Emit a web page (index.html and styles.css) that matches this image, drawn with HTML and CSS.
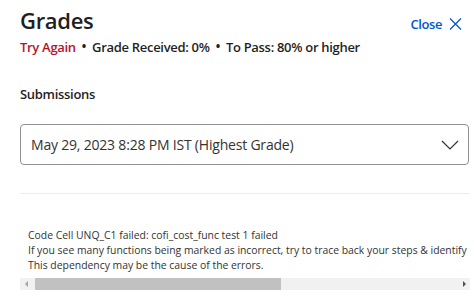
FILE: index.html
```html
<!DOCTYPE html>
<html>
<head>
<meta charset="utf-8">
<link rel="stylesheet" href="styles.css">
</head>
<body>
<div class="page">
  <div class="header">
    <h1 class="title">Grades</h1>
    <button class="close">Close
      <svg width="13" height="12" viewBox="0 0 13 12"><path d="M1 0.5 L12 11.5 M12 0.5 L1 11.5" stroke="#0056d2" stroke-width="1.2" fill="none"/></svg>
    </button>
  </div>
  <div class="status">
    <span class="fail">Try Again</span>
    <span class="dot">•</span>
    <span>Grade Received: 0%</span>
    <span class="dot">•</span>
    <span>To Pass: 80% or higher</span>
  </div>
  <div class="sub-label">Submissions</div>
  <div class="select">
    <span class="select-text">May 29, 2023 8:28 PM IST (Highest Grade)</span>
    <svg class="chev" width="18" height="10" viewBox="0 0 18 10"><path d="M1 1 L9 9 L17 1" stroke="#333" stroke-width="1.2" fill="none"/></svg>
  </div>
  <div class="divider"></div>
  <div class="output">
    <div class="output-text">
      <div>Code Cell UNQ_C1 failed: cofi_cost_func test 1 failed</div>
      <div>If you see many functions being marked as incorrect, try to trace back your steps &amp; identify</div>
      <div>This dependency may be the cause of the errors.</div>
    </div>
    <div class="scrollbar">
      <span class="arrow left"></span>
      <div class="track"><div class="thumb"></div></div>
      <span class="arrow right"></span>
    </div>
  </div>
</div>
</body>
</html>
```
FILE: styles.css
```css
html, body {
  margin: 0;
  padding: 0;
  background: #fff;
}
body {
  font-family: "Open Sans", "Noto Sans", sans-serif;
  color: #1f1f1f;
}
.page {
  padding: 6px 5px 0 20px;
}
.header {
  display: flex;
  justify-content: space-between;
  align-items: flex-start;
}
.title {
  margin: 0;
  font-size: 22px;
  line-height: 28px;
  font-weight: 600;
  letter-spacing: -0.3px;
}
.close {
  display: flex;
  align-items: center;
  gap: 7px;
  border: 0;
  background: none;
  padding: 0;
  margin: 9px 7px 0 0;
  font-family: inherit;
  font-size: 13px;
  font-weight: 600;
  color: #0056d2;
  letter-spacing: -0.4px;
}
.status {
  margin-top: 4px;
  font-size: 13px;
  line-height: 18px;
  font-weight: 600;
  letter-spacing: -0.3px;
  display: flex;
  gap: 6px;
}
.fail {
  color: #b5132b;
}
.dot {
  font-size: 12px;
  font-weight: 700;
}
.sub-label {
  margin-top: 29px;
  font-size: 13px;
  line-height: 18px;
  font-weight: 600;
  letter-spacing: -0.3px;
}
.select {
  margin-top: 21px;
  height: 41px;
  box-sizing: border-box;
  border: 1px solid #929292;
  border-radius: 4px;
  display: flex;
  align-items: center;
  justify-content: space-between;
  padding: 0 9px 0 10px;
}
.select-text {
  font-size: 14px;
  letter-spacing: -0.2px;
  color: #333;
}
.divider {
  margin-top: 28px;
  height: 1px;
  background: #ececec;
  margin-right: -1px;
}
.output {
  margin-top: 34px;
  margin-right: -1px;
}
.output-text {
  padding-left: 8px;
  white-space: nowrap;
  overflow: hidden;
  font-size: 10.4px;
  line-height: 15px;
  color: #333;
}
.scrollbar {
  margin-top: 5px;
  height: 12px;
  background: #f1f1f1;
  display: flex;
  align-items: center;
}
.track {
  flex: 1;
  height: 12px;
  display: flex;
  align-items: center;
}
.thumb {
  margin-left: 3px;
  width: 246px;
  height: 12px;
  background: #c1c1c1;
}
.arrow {
  width: 12px;
  height: 12px;
  display: flex;
  align-items: center;
  justify-content: center;
}
.arrow::before {
  content: "";
  border-top: 3px solid transparent;
  border-bottom: 3px solid transparent;
}
.arrow.left::before {
  border-right: 3px solid #a3a3a3;
}
.arrow.right::before {
  border-left: 3px solid #505050;
}
```
